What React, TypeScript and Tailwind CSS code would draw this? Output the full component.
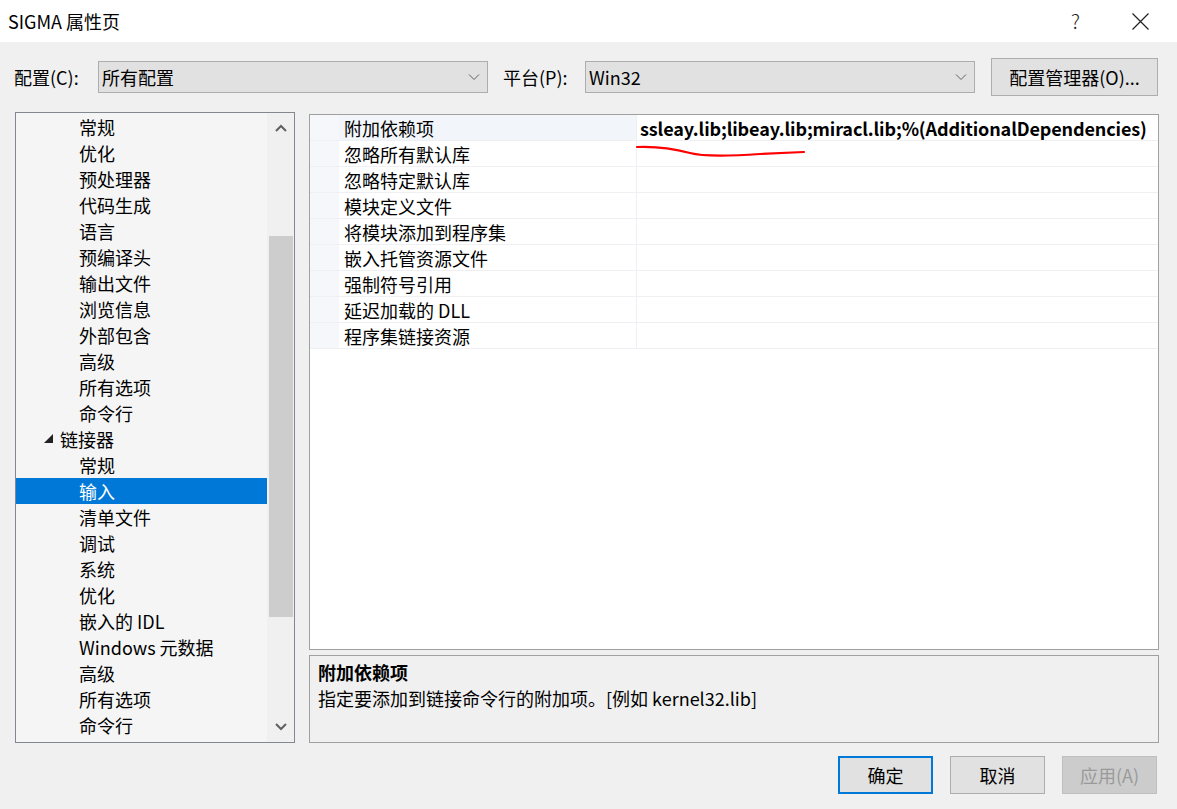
const font = "font-['Segoe_UI','Noto_Sans_CJK_SC',sans-serif]";

const treeItems: { label: string; level: 0 | 1; selected?: boolean }[] = [
  { label: "常规", level: 1 },
  { label: "优化", level: 1 },
  { label: "预处理器", level: 1 },
  { label: "代码生成", level: 1 },
  { label: "语言", level: 1 },
  { label: "预编译头", level: 1 },
  { label: "输出文件", level: 1 },
  { label: "浏览信息", level: 1 },
  { label: "外部包含", level: 1 },
  { label: "高级", level: 1 },
  { label: "所有选项", level: 1 },
  { label: "命令行", level: 1 },
  { label: "链接器", level: 0 },
  { label: "常规", level: 1 },
  { label: "输入", level: 1, selected: true },
  { label: "清单文件", level: 1 },
  { label: "调试", level: 1 },
  { label: "系统", level: 1 },
  { label: "优化", level: 1 },
  { label: "嵌入的 IDL", level: 1 },
  { label: "Windows 元数据", level: 1 },
  { label: "高级", level: 1 },
  { label: "所有选项", level: 1 },
  { label: "命令行", level: 1 },
];

const props = [
  "附加依赖项",
  "忽略所有默认库",
  "忽略特定默认库",
  "模块定义文件",
  "将模块添加到程序集",
  "嵌入托管资源文件",
  "强制符号引用",
  "延迟加载的 DLL",
  "程序集链接资源",
];

function Chevron() {
  return (
    <svg width="12" height="8" viewBox="0 0 12 8" className="shrink-0">
      <path d="M1 1.5 L6 6.5 L11 1.5" fill="none" stroke="#606060" strokeWidth="1" />
    </svg>
  );
}

function Combo({ value, className }: { value: string; className: string }) {
  return (
    <div className={`h-[32px] border border-[#adadad] bg-[#e1e1e1] flex items-center justify-between pl-[3px] pr-[7px] ${className}`}>
      <span className="text-[18px] text-black leading-none">{value}</span>
      <Chevron />
    </div>
  );
}

function Btn({ label, variant }: { label: string; variant: "default" | "normal" | "disabled" }) {
  const cls =
    variant === "default"
      ? "border-2 border-[#0078d7] bg-[#e1e1e1] text-black"
      : variant === "disabled"
        ? "border border-[#bfbfbf] bg-[#cccccc] text-[#9a9a9a]"
        : "border border-[#adadad] bg-[#e1e1e1] text-black";
  return (
    <div className={`w-[95px] h-[38px] flex items-center justify-center text-[18px] ${cls}`}>{label}</div>
  );
}

export default function App() {
  return (
    <div className={`w-[1177px] h-[809px] bg-[#f0f0f0] flex flex-col relative overflow-hidden ${font}`}>
      {/* title bar */}
      <div className="h-[42px] bg-white flex items-center justify-between pl-[8px] pr-[28px]">
        <span className="text-[18px] text-black">SIGMA 属性页</span>
        <div className="flex items-center gap-[52px]">
          <span className="text-[20px] text-[#222] font-light">?</span>
          <svg width="17" height="17" viewBox="0 0 17 17">
            <path d="M0.5 0.5 L16.5 16.5 M16.5 0.5 L0.5 16.5" stroke="#222" strokeWidth="1.2" />
          </svg>
        </div>
      </div>

      {/* config row */}
      <div className="flex items-center mt-[15px] h-[40px] pl-[14px]">
        <span className="text-[18px] w-[84px]">配置(C):</span>
        <Combo value="所有配置" className="w-[390px]" />
        <span className="text-[18px] ml-[15px] w-[82px]">平台(P):</span>
        <Combo value="Win32" className="w-[390px]" />
        <div className="ml-[16px] w-[167px] h-[38px] border border-[#adadad] bg-[#e1e1e1] flex items-center justify-center text-[18px]">
          配置管理器(O)...
        </div>
      </div>

      {/* panels */}
      <div className="flex mt-[15px] pl-[15px] gap-[14px]">
        {/* tree */}
        <div className="w-[280px] h-[631px] border border-[#828790] bg-[#f5f5f5] flex overflow-hidden">
          <div className="w-[251px] pt-[1px]">
            {treeItems.map((it, i) => (
              <div
                key={i}
                className={`h-[26px] flex items-center text-[18px] leading-none ${
                  it.selected ? "bg-[#0078d7] text-white" : "text-black"
                } ${it.level === 1 ? "pl-[63px]" : "pl-[28px]"}`}
              >
                {it.level === 0 && (
                  <svg width="10" height="10" viewBox="0 0 10 10" className="mr-[6px]">
                    <polygon points="9,0 9,9 0,9" fill="#222" />
                  </svg>
                )}
                {it.label}
              </div>
            ))}
          </div>
          <div className="flex-1 bg-[#f0f0f0] flex flex-col items-center">
            <div className="h-[30px] flex items-center justify-center">
              <svg width="12" height="8" viewBox="0 0 12 8">
                <path d="M1 7 L6 2 L11 7" fill="none" stroke="#606060" strokeWidth="2" />
              </svg>
            </div>
            <div className="mt-[93px] w-[24px] h-[383px] bg-[#cdcdcd]" />
            <div className="mt-[95px] h-[30px] flex items-center justify-center">
              <svg width="12" height="8" viewBox="0 0 12 8">
                <path d="M1 1 L6 6 L11 1" fill="none" stroke="#606060" strokeWidth="2" />
              </svg>
            </div>
          </div>
        </div>

        {/* right column */}
        <div className="w-[850px] flex flex-col">
          <div className="mt-[2px] h-[536px] border border-[#a0a0a0] bg-white relative">
            <div className="flex flex-col">
              {props.map((p, i) => (
                <div key={i} className="flex h-[26px] border-b border-[#eef0f4]">
                  <div className="w-[29px] bg-[#f5f7fb]" />
                  <div
                    className={`w-[298px] flex items-center pl-[5px] text-[18px] leading-none border-r border-[#eef0f4] ${
                      i === 0 ? "bg-[#f2f5fa]" : "bg-white"
                    }`}
                  >
                    {p}
                  </div>
                  <div className="flex-1 flex items-center pl-[3px] text-[18px] leading-none font-bold tracking-[-0.12px]">
                    {i === 0 ? "ssleay.lib;libeay.lib;miracl.lib;%(AdditionalDependencies)" : ""}
                  </div>
                </div>
              ))}
            </div>
          </div>
          {/* description */}
          <div className="mt-[5px] h-[88px] border border-[#a0a0a0] bg-[#f0f0f0] px-[8px] pt-[3px] text-[18px]">
            <div className="font-bold h-[26px] leading-[26px]">附加依赖项</div>
            <div className="h-[26px] leading-[26px]">指定要添加到链接命令行的附加项。[例如 kernel32.lib]</div>
          </div>
        </div>
      </div>

      {/* buttons */}
      <div className="flex justify-end gap-[17px] pr-[20px] mt-[13px]">
        <Btn label="确定" variant="default" />
        <Btn label="取消" variant="normal" />
        <Btn label="应用(A)" variant="disabled" />
      </div>

      {/* red annotation stroke */}
      <svg className="absolute left-0 top-0 pointer-events-none" width="1177" height="809">
        <path
          d="M637 147 C 660 146, 675 149, 690 153 S 730 156, 760 154 L 804 152"
          fill="none"
          stroke="#ff0000"
          strokeWidth="2.2"
          strokeLinecap="round"
        />
      </svg>
    </div>
  );
}
